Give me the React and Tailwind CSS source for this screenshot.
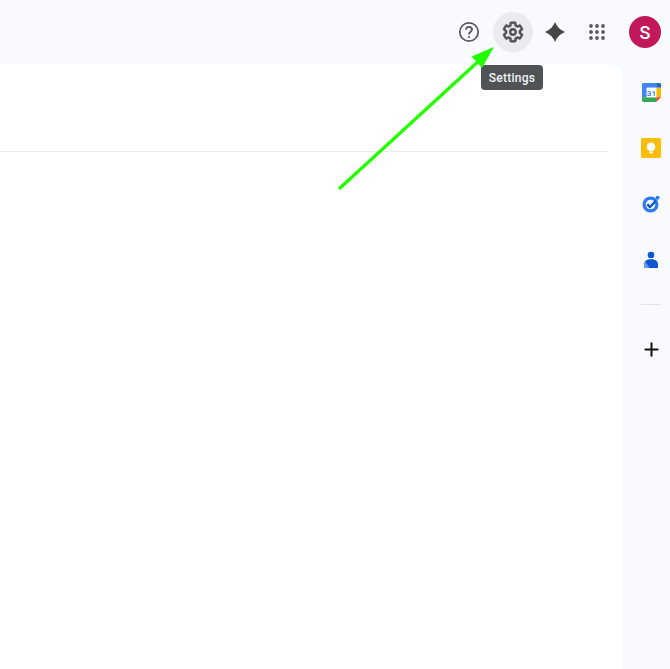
import { Plus } from 'lucide-react';

function HelpIcon() {
  return (
    <svg width="24" height="24" viewBox="0 0 24 24" fill="none">
      <circle cx="12" cy="12" r="9.200" stroke="#555759" strokeWidth="1.700" />
      <path d="M9 9.800c0-1.800 1.300-3 3-3s3 1.200 3 2.800c0 2.300-3 2.200-3 4.800" stroke="#555759" strokeWidth="1.800" />
      <circle cx="12" cy="17" r="1.100" fill="#555759" />
    </svg>
  );
}

function GearIcon() {
  return (
    <svg width="24" height="24" viewBox="0 0 24 24" fill="#505254" stroke="#505254" strokeWidth="0.500">
      <path d="M13.85 22.25h-3.7c-.74 0-1.36-.54-1.45-1.27l-.27-1.89c-.27-.14-.53-.29-.79-.46l-1.8.72c-.7.26-1.47-.03-1.81-.65L2.2 15.53c-.35-.66-.2-1.44.36-1.88l1.53-1.19c-.01-.15-.02-.3-.02-.46s.01-.31.02-.46l-1.52-1.19c-.59-.45-.74-1.26-.37-1.88l1.85-3.19c.34-.62 1.11-.9 1.79-.63l1.81.73c.26-.17.52-.32.78-.46l.27-1.91c.09-.7.71-1.26 1.44-1.26h3.7c.74 0 1.36.54 1.45 1.27l.27 1.89c.27.14.53.29.79.46l1.8-.72c.71-.26 1.48.03 1.82.65l1.84 3.18c.36.66.2 1.44-.36 1.88l-1.52 1.19c.01.15.02.3.02.46s-.01.31-.02.46l1.52 1.19c.56.45.72 1.23.37 1.86l-1.86 3.22c-.34.62-1.11.9-1.8.63l-1.8-.72c-.26.17-.52.32-.78.46l-.27 1.91c-.1.68-.72 1.22-1.46 1.22zm-3.23-2h2.76l.37-2.55.53-.22c.44-.18.88-.44 1.34-.78l.45-.34 2.38.96 1.38-2.4-2.03-1.58.07-.56c.03-.26.06-.51.06-.78s-.03-.53-.06-.78l-.07-.56 2.03-1.58-1.39-2.4-2.39.96-.45-.35c-.42-.32-.87-.58-1.33-.77l-.52-.22-.37-2.55h-2.76l-.37 2.55-.53.21c-.44.19-.88.44-1.34.79l-.45.33-2.38-.95-1.39 2.39 2.03 1.58-.07.56a7 7 0 0 0-.06.79c0 .26.02.53.06.78l.07.56-2.03 1.58 1.38 2.4 2.39-.96.45.35c.43.33.86.58 1.33.77l.53.22.38 2.55z" />
      <circle cx="12" cy="12" r="2.800" fill="none" strokeWidth="2.400" />
    </svg>
  );
}

function SparkIcon() {
  return (
    <svg width="24" height="24" viewBox="0 0 24 24" fill="#444746">
      <path d="M12 2Q14.800 9.200 22 12 14.800 14.800 12 22 9.200 14.800 2 12 9.200 9.200 12 2z" />
    </svg>
  );
}

function GridIcon() {
  return (
    <svg width="24" height="24" viewBox="0 0 24 24" fill="#5b5d5f">
      <circle cx="6" cy="6" r="1.900" />
      <circle cx="12" cy="6" r="1.900" />
      <circle cx="18" cy="6" r="1.900" />
      <circle cx="6" cy="12" r="1.900" />
      <circle cx="12" cy="12" r="1.900" />
      <circle cx="18" cy="12" r="1.900" />
      <circle cx="6" cy="18" r="1.900" />
      <circle cx="12" cy="18" r="1.900" />
      <circle cx="18" cy="18" r="1.900" />
    </svg>
  );
}

function CalendarIcon() {
  return (
    <svg width="19" height="19" viewBox="0 0 20 20">
      <path d="M1.500 0H15v5H5v10H0V1.500A1.500 1.500 0 0 1 1.500 0z" fill="#4285f4" />
      <path d="M15 0h3.500A1.500 1.500 0 0 1 20 1.500V5h-5z" fill="#1967d2" />
      <rect x="15" y="5" width="5" height="10" fill="#fbbc04" />
      <path d="M5 15h10v5H1.500A1.500 1.500 0 0 1 0 18.500V15h5z" fill="#34a853" />
      <path d="M15 15h5l-5 5z" fill="#ea4335" />
      <rect x="5" y="5" width="10" height="10" fill="#fff" />
      <text x="10" y="13.200" textAnchor="middle" fontSize="8.500" fontWeight="700" fill="#4285f4" fontFamily="Roboto, sans-serif">31</text>
    </svg>
  );
}

function KeepIcon() {
  return (
    <svg width="20" height="20" viewBox="0 0 20 20">
      <rect width="20" height="20" rx="2" fill="#fbbc04" />
      <circle cx="10" cy="8.700" r="4.300" fill="#fff" />
      <rect x="8" y="11" width="4" height="2.500" fill="#fff" />
      <rect x="8" y="14.200" width="4" height="1.300" fill="#fff" />
    </svg>
  );
}

function TasksIcon() {
  return (
    <svg width="20" height="20" viewBox="0 0 20 20" fill="none">
      <circle cx="9.500" cy="10.500" r="6.400" stroke="#2a7af3" strokeWidth="3.200" />
      <path d="M6.300 10.300l2.700 2.700 5.800-6" stroke="#0b57d0" strokeWidth="2.400" />
      <circle cx="16.600" cy="3.700" r="2" fill="#2a7af3" />
    </svg>
  );
}

function ContactsIcon() {
  return (
    <svg width="20" height="20" viewBox="0 0 20 20">
      <circle cx="10" cy="5" r="3.300" fill="#0b57d0" />
      <path d="M3 18v-3.500C3 11.200 6 9.300 10 9.300s7 1.900 7 5.200V18z" fill="#0b57d0" />
      <path d="M3 18v-3.500c0-1.200.4-2.200 1.200-3L8.500 18z" fill="#6a9bea" />
    </svg>
  );
}

function HeaderButton({ children, className }) {
  return <div className={`flex h-10 w-10 shrink-0 items-center justify-center rounded-full ${className}`}>{children}</div>;
}

function RailIcon({ children }) {
  return <div className="flex h-14 items-center justify-center">{children}</div>;
}

export default function App() {
  return (
    <div className="relative flex h-[669px] w-[670px] flex-col overflow-hidden bg-[#f8fafd] font-['Roboto',sans-serif]">
      <header className="flex h-16 shrink-0 items-center justify-end pr-[9px]">
        <HeaderButton>
          <HelpIcon />
        </HeaderButton>
        <HeaderButton className="ml-1 bg-[#e9ebee]">
          <GearIcon />
        </HeaderButton>
        <HeaderButton className="ml-[2px]">
          <SparkIcon />
        </HeaderButton>
        <HeaderButton className="ml-[2px]">
          <GridIcon />
        </HeaderButton>
        <div className="ml-[12px] flex h-8 w-8 items-center justify-center rounded-full bg-[#c2185b] text-[18px] font-medium text-white">S</div>
      </header>

      <div className="flex min-h-0 flex-1">
        <main className="w-[623px] rounded-tr-2xl bg-white pr-4">
          <div className="h-[88px] border-b border-[#e8eaed]" />
        </main>
        <aside className="flex flex-1 flex-col pl-[9px]">
          <RailIcon>
            <CalendarIcon />
          </RailIcon>
          <RailIcon>
            <KeepIcon />
          </RailIcon>
          <RailIcon>
            <TasksIcon />
          </RailIcon>
          <RailIcon>
            <ContactsIcon />
          </RailIcon>
          <div className="mx-[9px] mt-4 h-px bg-[#e3e3e3]" />
          <div className="mt-6 flex h-[40px] items-center justify-center text-[#111111]">
            <Plus size={21} strokeWidth={2.300} />
          </div>
        </aside>
      </div>

      <div className="absolute left-[481px] top-[65px] flex h-[25px] w-[62px] items-center justify-center rounded bg-[#505356] text-xs font-medium tracking-[0.02em] text-[#f1f3f4]">
        Settings
      </div>

      <svg className="absolute left-0 top-0" width="670" height="669" fill="none">
        <path d="M340 188L482 58" stroke="#22ff00" strokeWidth="3.300" strokeLinecap="round" />
        <path d="M494 47L471.500 56.500L482 68z" fill="#22ff00" />
      </svg>
    </div>
  );
}
